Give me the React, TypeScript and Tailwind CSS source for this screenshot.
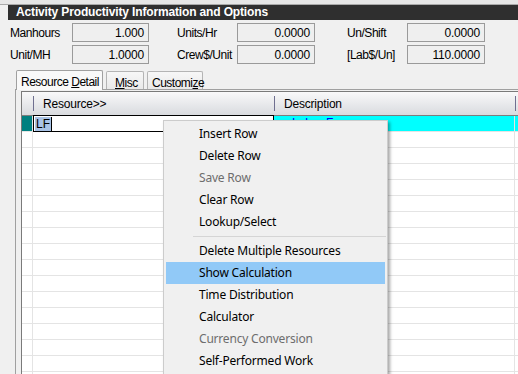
import React from 'react'

const fields = [
  [
    { label: 'Manhours', value: '1.000' },
    { label: 'Units/Hr', value: '0.0000' },
    { label: 'Un/Shift', value: '0.0000' },
  ],
  [
    { label: 'Unit/MH', value: '1.0000' },
    { label: 'Crew$/Unit', value: '0.0000' },
    { label: '[Lab$/Un]', value: '110.0000' },
  ],
]

const labelWidths = ['w-[62px] pl-0', 'w-[88px] pl-[28px]', 'w-[92px] pl-[32px]']
const boxWidths = ['w-[77px]', 'w-[78px]', 'w-[78px]']

type MenuItem = { label: string; disabled?: boolean; active?: boolean } | 'sep'

const menu: MenuItem[] = [
  { label: 'Insert Row' },
  { label: 'Delete Row' },
  { label: 'Save Row', disabled: true },
  { label: 'Clear Row' },
  { label: 'Lookup/Select' },
  'sep',
  { label: 'Delete Multiple Resources' },
  { label: 'Show Calculation', active: true },
  { label: 'Time Distribution' },
  { label: 'Calculator' },
  { label: 'Currency Conversion', disabled: true },
  { label: 'Self-Performed Work' },
]

function Field({ label, value, i }: { label: string; value: string; i: number }) {
  return (
    <>
      <div className={`${labelWidths[i]} text-[12px] tracking-[-0.45px] text-black whitespace-nowrap`}>{label}</div>
      <div
        className={`${boxWidths[i]} h-[19px] border border-[#9a9a9a] bg-[#efefef] flex items-center justify-end pr-[4px] text-[12px] tracking-[-0.2px] text-black`}
      >
        {value}
      </div>
    </>
  )
}

function GridRow({ first }: { first?: boolean }) {
  return (
    <div className="flex h-[16px] border-b border-[#e4e4e4] shrink-0">
      <div className={`w-[11px] shrink-0 ${first ? 'bg-[#008080]' : 'bg-white'} border-r border-[#e4e4e4]`} />
      {first ? (
        <div className="w-[241px] shrink-0 border border-black bg-white flex items-center pl-[1px] -mt-[1px] h-[17px]">
          <span className="bg-[#a9c3e6] text-[12px] leading-[14px] px-[1px]">LF</span>
          <span className="w-[1px] h-[14px] bg-black" />
        </div>
      ) : (
        <div className="w-[241px] shrink-0 bg-white border-r border-[#e4e4e4]" />
      )}
      <div
        className={`w-[241px] shrink-0 ${first ? 'bg-[#00ffff] text-[#0000ff]' : 'bg-white'} border-r border-[#e4e4e4] pl-[18px] text-[12px] leading-[15px]`}
      >
        {first ? 'Labor Foreman' : ''}
      </div>
      <div className={`flex-1 ${first ? 'bg-[#00ffff]' : 'bg-white'}`} />
    </div>
  )
}

export default function App() {
  return (
    <div className="relative w-[518px] h-[374px] overflow-hidden bg-[#f0f0f0] font-['Liberation_Sans',Arial,sans-serif] flex flex-col">
      <div className="h-[5px] bg-[#e6e6e6] border-b border-[#a9a9a9] shrink-0" />
      <div className="ml-[8px] h-[15px] bg-[#2f2f2f] text-white font-bold text-[12px] leading-[15px] pl-[8px] tracking-[-0.15px] shrink-0 whitespace-nowrap">
        Activity Productivity Information and Options
      </div>

      <div className="flex flex-col gap-[3px] mt-[3px] pl-[10px] shrink-0">
        {fields.map((row, r) => (
          <div key={r} className="flex items-center">
            {row.map((f, i) => (
              <Field key={f.label} label={f.label} value={f.value} i={i} />
            ))}
          </div>
        ))}
      </div>

      <div className="flex items-end gap-[3px] ml-[16px] mt-[5px] h-[20px] shrink-0 text-[12px] tracking-[-0.5px] whitespace-nowrap">
        <div className="w-[87px] h-[20px] border border-b-0 border-[#a0a0a0] bg-[#f9f9f9] rounded-t-[2px] pl-[4px] pt-[2px] relative z-10 -mb-[1px]">
          Resource <span className="underline">D</span>etail
        </div>
        <div className="w-[38px] h-[18px] border border-b-0 border-[#b4b4b4] bg-gradient-to-b from-[#f7f7f7] to-[#e9e9e9] rounded-t-[2px] pl-[8px] pt-[2px]">
          <span className="underline">M</span>isc
        </div>
        <div className="w-[56px] h-[18px] border border-b-0 border-[#b4b4b4] bg-gradient-to-b from-[#f7f7f7] to-[#e9e9e9] rounded-t-[2px] pl-[4px] pt-[2px]">
          Customi<span className="underline">z</span>e
        </div>
      </div>

      <div className="flex-1 ml-[15px] border-t border-l border-[#a0a0a0] pl-[5px] pt-[1px] flex flex-col min-h-0">
        <div className="flex-1 border-l border-t border-[#7a7a7a] flex flex-col min-h-0 overflow-hidden">
          <div className="flex h-[24px] border-b border-[#7d7d7d] bg-gradient-to-b from-[#f9f9fa] to-[#d9dbdf] shrink-0 text-[12px] tracking-[-0.2px]">
            <div className="w-[11px] shrink-0" />
            <div className="w-[241px] flex items-center relative pl-[10px] shrink-0">
              <span className="absolute left-0 top-[4px] h-[15px] w-[1px] bg-[#6f6f90]" />
              Resource&gt;&gt;
            </div>
            <div className="w-[241px] flex items-center relative pl-[10px] shrink-0">
              <span className="absolute left-0 top-[4px] h-[15px] w-[1px] bg-[#6f6f90]" />
              Description
            </div>
            <div className="flex-1 relative">
              <span className="absolute left-0 top-[4px] h-[15px] w-[1px] bg-[#6f6f90]" />
            </div>
          </div>
          {Array.from({ length: 17 }).map((_, i) => (
            <GridRow key={i} first={i === 0} />
          ))}
        </div>
      </div>

      <div className="absolute left-[163px] top-[120px] w-[225px] h-[270px] bg-[#f0f0f0] border border-[#cccccc] shadow-[2px_2px_3px_rgba(0,0,0,0.35)] pt-[2px] font-['Noto_Sans',sans-serif] text-[12px] tracking-[-0.2px]">
        {menu.map((m, i) =>
          m === 'sep' ? (
            <div key={i} className="h-[7px] flex items-center pl-[29px] pr-[1px]">
              <div className="h-[1px] w-full bg-[#d5d5d5]" />
            </div>
          ) : (
            <div
              key={i}
              className={`h-[22px] mx-[2px] flex items-center pl-[33px] ${m.active ? 'bg-[#91c9f7]' : ''} ${m.disabled ? 'text-[#6d6d6d]' : 'text-black'}`}
            >
              {m.label}
            </div>
          )
        )}
      </div>
    </div>
  )
}
